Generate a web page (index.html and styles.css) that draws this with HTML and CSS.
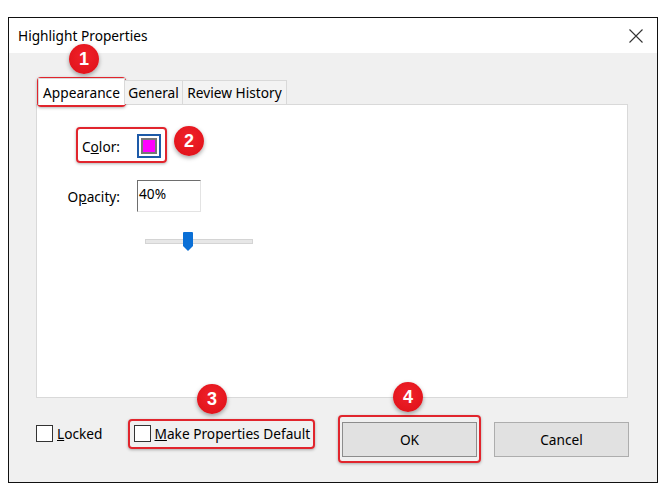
FILE: index.html
```html
<!DOCTYPE html>
<html lang="en">
<head>
<meta charset="utf-8">
<title>Highlight Properties</title>
<link rel="stylesheet" href="styles.css">
</head>
<body>
<div class="page">
  <div class="dialog">
    <div class="titlebar">
      <span class="title">Highlight Properties</span>
      <svg class="close" width="14" height="14" viewBox="0 0 14 14"><path d="M0.5 0.5 L13.5 13.5 M13.5 0.5 L0.5 13.5" stroke="#333" stroke-width="1.1" fill="none"/></svg>
    </div>
    <div class="body">
      <div class="tabs">
        <div class="tab tab-active tab-appearance">Appearance</div>
        <div class="tab tab-general">General</div>
        <div class="tab tab-history">Review History</div>
      </div>
      <div class="panel">
        <div class="form">
          <div class="label">C<u>o</u>lor:</div>
          <div class="swatch"><div class="swatch-inner"></div></div>
          <div class="label">O<u>p</u>acity:</div>
          <div class="textbox">40%</div>
          <div class="spacer"></div>
          <div class="slider">
            <div class="track"></div>
            <svg class="thumb" width="10" height="19" viewBox="0 0 10 19"><path d="M0 1 Q0 0 1 0 L9 0 Q10 0 10 1 L10 14 L5 19 L0 14 Z" fill="#0a6fd6"/></svg>
          </div>
        </div>
      </div>
      <div class="footer">
        <label class="check"><span class="box"></span><span><u>L</u>ocked</span></label>
        <label class="check check-default"><span class="box"></span><span><u>M</u>ake Properties Default</span></label>
        <div class="buttons">
          <div class="btn btn-ok">OK</div>
          <div class="btn">Cancel</div>
        </div>
      </div>
    </div>
  </div>

  <div class="mark mark-1"></div>
  <div class="mark mark-2"></div>
  <div class="mark mark-3"></div>
  <div class="mark mark-4"></div>
  <div class="badge badge-1">1</div>
  <div class="badge badge-2">2</div>
  <div class="badge badge-3">3</div>
  <div class="badge badge-4">4</div>
</div>
</body>
</html>
```

FILE: styles.css
```css
html, body {
  margin: 0;
  padding: 0;
  background: #ffffff;
}
body {
  font-family: "Noto Sans", "Open Sans", sans-serif;
  font-size: 13.7px;
  color: #000;
}
.page {
  position: relative;
  width: 670px;
  height: 496px;
  padding: 17px 0 0 8px;
  box-sizing: border-box;
}
.dialog {
  width: 650px;
  height: 466px;
  box-sizing: border-box;
  border: 1px solid #111;
  display: flex;
  flex-direction: column;
  background: #f0f0f0;
}
.titlebar {
  height: 35px;
  background: #fff;
  display: flex;
  align-items: center;
  padding: 0 14px 0 9px;
  flex: none;
}
.title {
  flex: 1;
  padding-bottom: 1px;
}
.close {
  display: block;
}
.body {
  flex: 1;
  padding: 25px 29px 0 27px;
  display: flex;
  flex-direction: column;
}
.tabs {
  display: flex;
  align-items: flex-end;
  height: 26px;
  margin-left: 2px;
  position: relative;
  z-index: 1;
}
.tab {
  height: 24px;
  box-sizing: border-box;
  border: 1px solid #d9d9d9;
  border-bottom: none;
  background: #f3f3f3;
  display: flex;
  align-items: center;
  justify-content: center;
  margin-left: -1px;
}
.tab-active {
  height: 27px;
  margin-bottom: -1px;
  background: #fff;
  margin-left: 0;
}
.tab-appearance { width: 87px; }
.tab-general { width: 59px; }
.tab-history { width: 105px; }
.panel {
  height: 294px;
  box-sizing: border-box;
  background: #fff;
  border: 1px solid #d9d9d9;
  padding-top: 29px;
}
.form {
  display: grid;
  grid-template-columns: 83px auto;
  column-gap: 17px;
  row-gap: 22px;
  justify-content: start;
  align-items: center;
}
.form .spacer { height: 0; }
.label {
  text-align: right;
}
.swatch {
  width: 24px;
  height: 24px;
  box-sizing: border-box;
  border: 2px solid #1d5aa8;
  padding: 2px;
  background: #fff;
}
.swatch-inner {
  width: 100%;
  height: 100%;
  box-sizing: border-box;
  border: 2px solid #777;
  background: #ff00ff;
}
.textbox {
  width: 64px;
  height: 32px;
  box-sizing: border-box;
  border-top: 1px solid #6e6e6e;
  border-left: 1px solid #6e6e6e;
  border-right: 1px solid #e3e3e3;
  border-bottom: 1px solid #e3e3e3;
  padding: 3px 0 0 1px;
}
.slider {
  position: relative;
  width: 108px;
  height: 19px;
  margin-left: 8px;
  margin-top: -2px;
}
.track {
  position: absolute;
  left: 0;
  right: 0;
  top: 7px;
  height: 5px;
  box-sizing: border-box;
  background: #e7e7e7;
  border: 1px solid #d4d4d4;
}
.thumb {
  position: absolute;
  left: 38px;
  top: 0;
}
.footer {
  display: flex;
  align-items: flex-start;
  margin-top: 24px;
}
.check {
  display: flex;
  align-items: center;
  gap: 4px;
  margin-top: 2px;
}
.check-default {
  margin-left: 31px;
}
.box {
  width: 17px;
  height: 17px;
  box-sizing: border-box;
  border: 1px solid #333;
  background: #fff;
}
.buttons {
  margin-left: auto;
  display: flex;
  gap: 17px;
  margin-right: -1px;
}
.btn {
  width: 135px;
  height: 35px;
  box-sizing: border-box;
  border: 1px solid #adadad;
  background: #e1e1e1;
  display: flex;
  align-items: center;
  justify-content: center;
}
.btn-ok {
  border-color: #8c8c8c;
}

/* annotation overlays */
.mark {
  position: absolute;
  box-sizing: border-box;
  border: 2px solid #e1252d;
  border-radius: 4px;
  box-shadow: 0 1px 3px rgba(0,0,0,0.3);
}
.mark-1 { left: 37px; top: 77px; width: 89px; height: 30px; }
.mark-2 { left: 76px; top: 127px; width: 91px; height: 36px; }
.mark-3 { left: 128px; top: 419px; width: 187px; height: 30px; }
.mark-4 { left: 338px; top: 415px; width: 143px; height: 48px; }
.badge {
  position: absolute;
  width: 30px;
  height: 30px;
  border-radius: 50%;
  background: radial-gradient(circle at 50% 40%, #f0222a 0%, #e3151d 70%, #c80f16 100%);
  box-shadow: 0 2px 4px rgba(0,0,0,0.35);
  color: #fff;
  font-family: "Liberation Sans", Arial, sans-serif;
  font-weight: bold;
  font-size: 18px;
  line-height: 30px;
  text-align: center;
}
.badge-1 { left: 69px; top: 44px; }
.badge-2 { left: 174px; top: 126px; }
.badge-3 { left: 197px; top: 384px; }
.badge-4 { left: 393px; top: 382px; }
```
